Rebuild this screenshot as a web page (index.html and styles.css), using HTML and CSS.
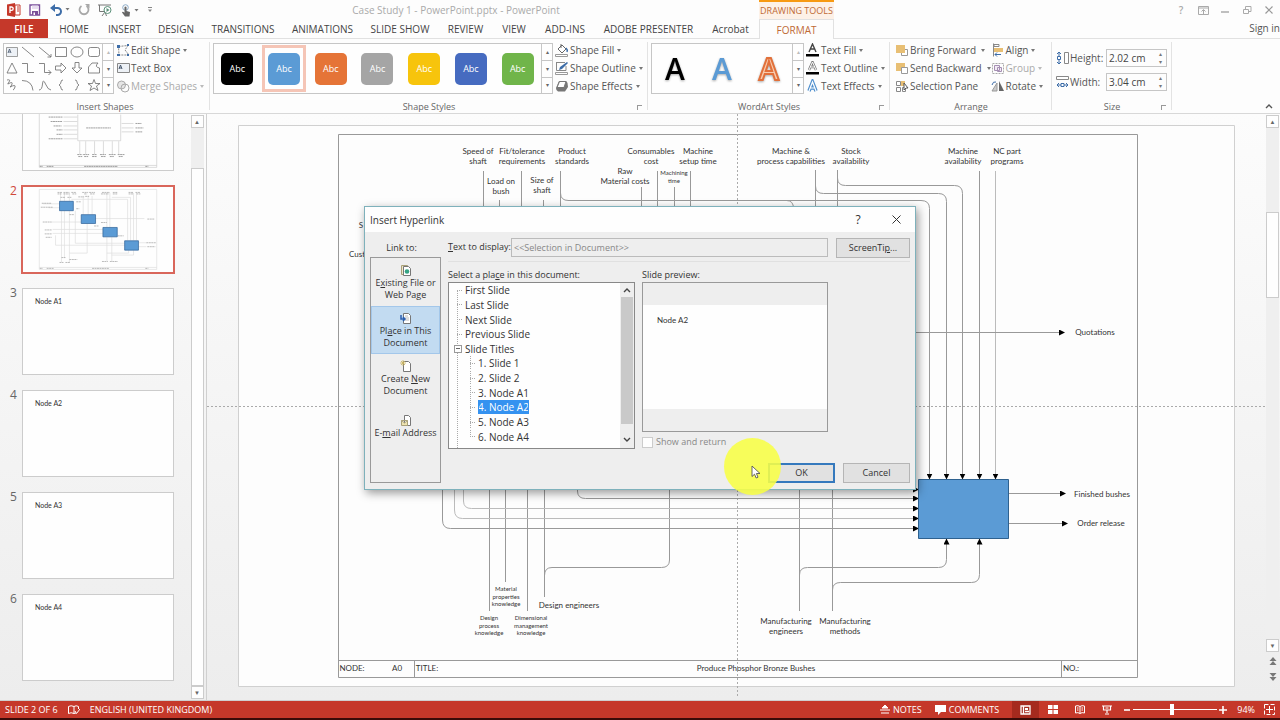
FILE: index.html
```html
<!DOCTYPE html>
<html lang="en">
<head>
<meta charset="utf-8">
<title>Case Study 1 - PowerPoint.pptx - PowerPoint</title>
<link rel="stylesheet" href="styles.css">
</head>
<body>
<div class="app">
  <header class="titlebar">
    <div class="quick">
      <svg width="14" height="14" viewBox="0 0 14 14"><path d="M8 2h5v10H8z" fill="#fff" stroke="#c5382a"/><path d="M10 4h2M10 6h2M10 8h2" stroke="#c5382a"/><path d="M0 1.500 8 0v14L0 12.500z" fill="#c5382a"/><path d="M3 10V4h1.500a1.600 1.600 0 0 1 0 3.400H3" fill="none" stroke="#fff" stroke-width="1.300"/></svg>
      <button aria-label="Save"><svg width="12" height="12" viewBox="0 0 12 12"><path d="M1 1h9.500v10H1z" fill="#fff" stroke="#7a4f9a" stroke-width="1.400"/><path d="M3 1.500h6v3.500H3z" fill="#e7dcef"/><path d="M3 7h6v4H3z" fill="#7a4f9a"/><path d="M4.500 8.500H6V11H4.500z" fill="#fff"/></svg></button>
      <button aria-label="Undo"><svg width="20" height="12" viewBox="0 0 20 12"><path d="M2 4h5.500a3.500 3.500 0 0 1 0 7H6" fill="none" stroke="#3d6da8" stroke-width="2"/><path d="M5 0v8L0 4z" fill="#3d6da8"/><path d="M15.500 4h4l-2 2.500z" fill="#777"/></svg></button>
      <button aria-label="Repeat"><svg width="12" height="12" viewBox="0 0 12 12"><path d="M8.500 2A4.500 4.500 0 1 1 3.500 2" fill="none" stroke="#a8a8a8" stroke-width="1.800"/><path d="M7 0h4.500v4.500z" fill="#a8a8a8"/></svg></button>
      <button aria-label="Start from beginning"><svg width="14" height="13" viewBox="0 0 14 13"><path d="M0 1h13M1.500 1v6.500H7M4 12l3-4 1.500 4" fill="none" stroke="#777"/><circle cx="9.500" cy="6" r="3.500" fill="#fff" stroke="#5b9079"/><path d="M8.500 4v4l3-2z" fill="#5b9079"/></svg></button>
      <button aria-label="Touch mode"><svg width="18" height="13" viewBox="0 0 18 13"><circle cx="4.500" cy="3.500" r="2.800" fill="none" stroke="#8cabc8"/><path d="M3.500 3q1-1 2 0v4l3.500 1-.5 4.500H4L1 8.500q.5-1.500 2.500.2z" fill="#666"/><path d="M13.500 5h4l-2 2.500z" fill="#777"/></svg></button>
      <button aria-label="Customize toolbar"><svg width="6" height="6" viewBox="0 0 6 6"><path d="M1 .5h4" stroke="#888"/><path d="M1 2.500h4L3 5z" fill="#888"/></svg></button>
    </div>
    <div class="doc-title">Case Study 1 - PowerPoint.pptx - PowerPoint</div>
    <div class="context">DRAWING TOOLS</div>
    <div class="window-buttons">
      <button aria-label="Help">?</button>
      <button aria-label="Ribbon display"><svg width="11" height="9" viewBox="0 0 11 9"><path d="M.5.500h10v8H.500zM.5 2h10M5.500 8V4M3.500 5.500l2-2 2 2" fill="none" stroke="#aaa"/></svg></button>
      <button aria-label="Minimize"><svg width="8" height="8" viewBox="0 0 8 8"><path d="M0 6h8" stroke="#aaa" stroke-width="1.500"/></svg></button>
      <button aria-label="Restore"><svg width="9" height="9" viewBox="0 0 9 9"><path d="M.5 3.500h5v4h-5zM2.500 3V.500H8v5H6" fill="none" stroke="#aaa"/></svg></button>
      <button aria-label="Close"><svg width="8" height="8" viewBox="0 0 8 8"><path d="M.5.500l7 7M7.500.500l-7 7" stroke="#999" stroke-width="1.200"/></svg></button>
    </div>
  </header>
  <nav class="tabs">
    <button class="tab file">FILE</button><button class="tab">HOME</button><button class="tab">INSERT</button><button class="tab">DESIGN</button><button class="tab">TRANSITIONS</button><button class="tab">ANIMATIONS</button><button class="tab">SLIDE SHOW</button><button class="tab">REVIEW</button><button class="tab">VIEW</button><button class="tab">ADD-INS</button><button class="tab">ADOBE PRESENTER</button><button class="tab">Acrobat</button><button class="tab active">FORMAT</button>
    <a class="signin" href="#">Sign in</a>
  </nav>
  <section class="ribbon">
    <div class="group shapes-group">
      <div class="group-body">
        <div class="gallery">
          <div class="shape-grid">
            <button aria-label="Text box"><svg width="14" height="14" viewBox="0 0 14 14"><path d="M1.500 2.500h11v9h-11z" fill="#edf1f6" stroke="#888"/><path d="M3 8l1.500-4L6 8M3.500 7h2" fill="none" stroke="#44546a"/></svg></button>
            <button aria-label="Line"><svg width="14" height="14" viewBox="0 0 14 14"><path d="M1 2l12 10"/></svg></button>
            <button aria-label="Arrow"><svg width="14" height="14" viewBox="0 0 14 14"><path d="M1 2l12 10M13 9v3h-3.500"/></svg></button>
            <button aria-label="Rectangle"><svg width="14" height="14" viewBox="0 0 14 14"><path d="M1.500 2.500h11v9h-11z"/></svg></button>
            <button aria-label="Oval"><svg width="14" height="14" viewBox="0 0 14 14"><ellipse cx="7" cy="7" rx="6" ry="5"/></svg></button>
            <button aria-label="Rounded rectangle"><svg width="14" height="14" viewBox="0 0 14 14"><rect x="1.500" y="2.500" width="11" height="9" rx="2"/></svg></button>
            <button aria-label="Triangle"><svg width="14" height="14" viewBox="0 0 14 14"><path d="M7 2l5 10H2z"/></svg></button>
            <button aria-label="Elbow connector"><svg width="14" height="14" viewBox="0 0 14 14"><path d="M1 2.500h5.500v9H13"/></svg></button>
            <button aria-label="Elbow arrow"><svg width="14" height="14" viewBox="0 0 14 14"><path d="M1 2.500h5.500v9H13M10.500 9l2.500 2.500-2.500 2.500"/></svg></button>
            <button aria-label="Right arrow"><svg width="14" height="14" viewBox="0 0 14 14"><path d="M1.500 5H7V2l5 5-5 5V9H1.500z"/></svg></button>
            <button aria-label="Down arrow"><svg width="14" height="14" viewBox="0 0 14 14"><path d="M5 1.500V7H2l5 5 5-5H9V1.500z"/></svg></button>
            <button aria-label="Freeform"><svg width="14" height="14" viewBox="0 0 14 14"><path d="M1.500 12V6L5 2h6Q7 6 12.500 7v5z"/></svg></button>
            <button aria-label="Scribble"><svg width="14" height="14" viewBox="0 0 14 14"><path d="M2 2q4-1 2 2T3 6q5-3 4 0T5 9q6-3 5 0t-2 3"/></svg></button>
            <button aria-label="Arc"><svg width="14" height="14" viewBox="0 0 14 14"><path d="M1 2.500q10 0 11 10"/></svg></button>
            <button aria-label="Curve"><svg width="14" height="14" viewBox="0 0 14 14"><path d="M1 12q3 0 3.500-6t3 0 5.500 6"/></svg></button>
            <button aria-label="Left brace"><svg width="14" height="14" viewBox="0 0 14 14"><path d="M9 2Q7 2 7 4t-2 3q2 1 2 3t2 2"/></svg></button>
            <button aria-label="Right brace"><svg width="14" height="14" viewBox="0 0 14 14"><path d="M5 2q2 0 2 2t2 3q-2 1-2 3t-2 2"/></svg></button>
            <button aria-label="Star"><svg width="14" height="14" viewBox="0 0 14 14"><path d="M7 1.500l1.500 4H13L9.500 8l1.500 4.500L7 10l-4 2.500L4.500 8 1 5.500h4.500z"/></svg></button>
          </div>
          <div class="spin"><button class="off" aria-label="Up">▴</button><button aria-label="Down">▾</button><button aria-label="More">▾</button></div>
        </div>
        <div class="tools">
          <button><svg width="14" height="14" viewBox="0 0 14 14"><path d="M2.500 3.500L12 2.500 9 7l4 5H3z" fill="none" stroke="#888" stroke-dasharray="2 1"/><path d="M1 2h3v3H1zM11 1h2v2h-2zM1 11h3v2H1zM11 11h2v2h-2z" fill="#3d6da8"/></svg>Edit Shape<i></i></button>
          <button><svg width="14" height="14" viewBox="0 0 14 14"><path d="M1.500 2.500h12v9h-12z" fill="#edf1f6" stroke="#888"/><path d="M3 8l1.500-4L6 8M3.500 7h2" fill="none" stroke="#44546a"/></svg>Text Box</button>
          <button class="off"><svg width="14" height="14" viewBox="0 0 14 14"><circle cx="5.500" cy="6" r="4" fill="#e6e6e6" stroke="#aaa"/><circle cx="9" cy="9" r="4" fill="none" stroke="#aaa"/></svg>Merge Shapes<i></i></button>
        </div>
      </div>
      <div class="group-name">Insert Shapes</div>
    </div>
    <div class="group">
      <div class="group-body">
        <div class="gallery grow">
          <div class="styles">
            <button class="cell"><span class="swatch black">Abc</span></button>
            <button class="cell picked"><span class="swatch blue">Abc</span></button>
            <button class="cell"><span class="swatch orange">Abc</span></button>
            <button class="cell"><span class="swatch gray">Abc</span></button>
            <button class="cell"><span class="swatch yellow">Abc</span></button>
            <button class="cell"><span class="swatch navy">Abc</span></button>
            <button class="cell"><span class="swatch green">Abc</span></button>
          </div>
          <div class="spin"><button aria-label="Up">▴</button><button aria-label="Down">▾</button><button aria-label="More">▾</button></div>
        </div>
        <div class="tools shape-tools">
          <button><svg width="14" height="14" viewBox="0 0 14 14"><path d="M3 6l4-4 4 4-4 4zM6 1v4" fill="#fff" stroke="#666"/><path d="M11 5q2 2 1 4" fill="none" stroke="#3d6da8" stroke-width="1.500"/><path d="M.5 11.500h12v2H.500z" fill="#fff" stroke="#999"/></svg>Shape Fill<i></i></button>
          <button><svg width="14" height="14" viewBox="0 0 14 14"><path d="M1 1.500h9M1.500 1v8.500H11V5" fill="none" stroke="#888"/><path d="M4 9l1-3 7-5 1 1-6 6z" fill="#3d6da8"/><path d="M.5 11.500h12v2H.500z" fill="#fff" stroke="#999"/></svg>Shape Outline<i></i></button>
          <button><svg width="14" height="14" viewBox="0 0 14 14"><path d="M4 2h6q2 0 2.500 2L13 8l-3 4.500H3Q1 12 1 9z" fill="#777"/><path d="M4.500 2.500H11L9 8.500H2z" fill="#fff" stroke="#777"/></svg>Shape Effects<i></i></button>
        </div>
      </div>
      <div class="group-name">Shape Styles<span class="launch"></span></div>
    </div>
    <div class="group">
      <div class="group-body">
        <div class="gallery grow">
          <div class="wordart">
            <button aria-label="Fill black"><svg width="30" height="44" viewBox="0 0 30 44"><text x="15" y="33" class="art a1">A</text></svg></button>
            <button aria-label="Fill blue"><svg width="30" height="44" viewBox="0 0 30 44"><text x="15" y="33" class="art a2">A</text></svg></button>
            <button aria-label="Fill orange"><svg width="30" height="44" viewBox="0 0 30 44"><text x="15" y="33" class="art a3">A</text></svg></button>
          </div>
          <div class="spin"><button class="off" aria-label="Up">▴</button><button aria-label="Down">▾</button><button aria-label="More">▾</button></div>
        </div>
        <div class="tools art-tools">
          <button><svg width="14" height="14" viewBox="0 0 14 14"><path d="M3 9L6.500 1 10 9M4.500 6h4" fill="none" stroke="#444" stroke-width="1.400"/><path d="M0 11h13v2.500H0z"/></svg>Text Fill<i></i></button>
          <button><svg width="14" height="14" viewBox="0 0 14 14"><path d="M3 9L6.500 1 10 9M4.500 6h4" fill="none" stroke="#777" stroke-width="2.400"/><path d="M3 9L6.500 1 10 9M4.500 6h4" fill="none" stroke="#fff"/><path d="M0 11h13v2.500H0z"/></svg>Text Outline<i></i></button>
          <button><svg width="14" height="14" viewBox="0 0 14 14"><path d="M3 12L6.500 3 10 12M4.500 9h4" fill="none" stroke="#4f8fcd" stroke-width="3.500"/><path d="M3 12L6.500 3 10 12M4.500 9h4" fill="none" stroke="#fff" stroke-width="1.200"/></svg>Text Effects<i></i></button>
        </div>
      </div>
      <div class="group-name">WordArt Styles<span class="launch"></span></div>
    </div>
    <div class="group">
      <div class="group-body arrange">
        <div class="tools">
          <button><svg width="14" height="14" viewBox="0 0 14 14"><path d="M6.500 6.500h6v6h-6z" fill="#fff" stroke="#999"/><path d="M1 2h9v8H1z" fill="#e8bf74"/></svg>Bring Forward<i class="far"></i></button>
          <button><svg width="14" height="14" viewBox="0 0 14 14"><path d="M1 2h9v8H1z" fill="#e8bf74"/><path d="M6.500 6.500h6v6h-6z" fill="#fff" stroke="#999"/></svg>Send Backward<i class="far"></i></button>
          <button><svg width="14" height="14" viewBox="0 0 14 14"><path d="M1.500 2.500h4v4h-4zM1.500 8.500h4v4h-4zM7.500 8.500h3v4h-3z" fill="#fff" stroke="#888"/><path d="M6 2h4v5H6z" fill="#e8bf74"/><path d="M9 4v7l2-2h2z" fill="#fff" stroke="#555"/></svg>Selection Pane</button>
        </div>
        <div class="tools">
          <button><svg width="14" height="14" viewBox="0 0 14 14"><path d="M2.500.500v13" stroke="#888"/><path d="M3 1.500h5v2H3z" fill="#fff" stroke="#888"/><path d="M3 5h9v4H3z" fill="#e8bf74"/><path d="M4 11.500h6M6 9.500l-2 2 2 2" fill="none" stroke="#3d6da8"/></svg>Align<i></i></button>
          <button class="off"><svg width="14" height="14" viewBox="0 0 14 14"><path d="M1.500 2.500h11v10h-11z" fill="none" stroke="#aaa" stroke-dasharray="2 1"/><path d="M3.500 4.500h5v5h-5zM6.500 6.500h4v4h-4z" fill="#f3ebf5" stroke="#a58fb3"/></svg>Group<i></i></button>
          <button><svg width="14" height="14" viewBox="0 0 14 14"><path d="M6 12V4L1 12z" fill="#ccc" stroke="#999"/><path d="M8 12V2l5 10z" fill="#666"/><path d="M1 6q1-4 4-3" fill="none" stroke="#3d6da8"/></svg>Rotate<i></i></button>
        </div>
      </div>
      <div class="group-name">Arrange</div>
    </div>
    <div class="group">
      <div class="size">
        <svg width="13" height="14" viewBox="0 0 13 14"><path d="M3 1v12M1 3l2-2 2 2M1 11l2 2 2-2" fill="none" stroke="#3d6da8"/><path d="M1.500 5.500h3v3h-3z" fill="#fff" stroke="#3d6da8"/><path d="M8.500 1.500h4v11h-4z" fill="#fff" stroke="#888"/></svg>
        <label for="h">Height:</label><span class="num"><input id="h" value="2.02 cm"><em>▴<br>▾</em></span>
        <svg width="13" height="14" viewBox="0 0 13 14"><path d="M.5 1.500h12v3H.500z" fill="#fff" stroke="#888"/><path d="M1 10h11M3 8l-2 2 2 2M10 8l2 2-2 2" fill="none" stroke="#3d6da8"/><path d="M5 8.500h3v3H5z" fill="#fff" stroke="#3d6da8"/></svg>
        <label for="w">Width:</label><span class="num"><input id="w" value="3.04 cm"><em>▴<br>▾</em></span>
      </div>
      <div class="group-name">Size<span class="launch"></span></div>
    </div>
    <div class="collapse"><svg width="8" height="6" viewBox="0 0 8 6"><path d="M1 5l3-3 3 3" fill="none" stroke="#555" stroke-width="1.400"/></svg></div>
  </section>
  <main class="work">
    <aside class="panel">
      <ol class="thumbs">
        <li><span class="no">1</span><div class="thumb"><svg viewBox="22 84 152 87">
          <path d="M38.500 100v67.500H157.500V100M38.500 165.500h119M77.500 114v26.500h43.500V114" fill="none" stroke="#ccc" stroke-width=".7"/>
          <path d="M63 116.500h14M63 121h14M63 125.500h14M63 129.500h14M63 134h14M63 138.500h14M122 123h12M122 127.500h12M122 131.500h12M79.500 141v13M85.500 141v13M94.500 141v13M103.500 141v13M112.500 141v13M119 141v13" stroke="#ccc" stroke-width=".7"/>
          <path d="M48 116.500h14M50 121h12M53 125.500h8M56 129.500h6M56 134h6M48 138.500h14M86 127.500h25M136 123h6M136 127.500h8M136 131.500h7M77 154.500h5M83 154.500h6M92 154.500h5M100 154.500h6M109 154.500h7M118 154.500h7M78 156.500h4M84 156.500h4M92 156.500h5M101 156.500h5M110 156.500h4M119 156.500h4M39 166.500h3M46 166.500h7M84 166.500h34M146 166.500h3" stroke="#888" stroke-width=".8" stroke-dasharray="2 .4"/>
        </svg></div></li>
        <li class="current"><span class="no">2</span><div class="thumb"><svg viewBox="22 186 152 87">
          <path d="M38.500 188.500h119v81h-119zM38.500 267.500h119" fill="none" stroke="#ddd" stroke-width=".7"/>
          <path d="M60 192v8M64 192v8M69 192v8M71 198.500h57V240M83 195v19M88 195v19M92 195v19M107 192v35M110 192v35M112 196.500h19V240M134 192v48M137 192v48M42 203h17M48 207h11M51 221.500h30M52 229h51M52 233h51M55 235v10h70M75 210v33h50M95 218h50M61 210v52M64 210v48M69 210v52M87 223v30H69M107 237v24M112 237v24M112 255h22v-5M107 253h22v-3M139 242.500h8M139 246.500h8" fill="none" stroke="#ddd" stroke-width=".7"/>
          <path d="M57 191.500h5M63 191.500h6M71 191.500h5M82 191.500h6M89 191.500h6M102 191.500h8M113 191.500h5M129 191.500h5M136 191.500h5M57 193h4M63 193h6M72 193h4M84 193h3M90 193h5M101 193h8M113 193h5M129 193h5M137 193h4M60 196.500h5M67 196.500h4M78 196h6M85 195.500h4M41 202.500h10M40 206.500h12M76 201h5M76 208h3M69 214h5M42 221.500h9M44 229.500h7M44 233.500h7M45 237h6M94 225.500h5M101 222h6M118 235.500h6M148 218.500h7M147 242.500h10M148 246.500h8M61 257.500h4M69 259.500h8M59 262.500h4M65 262.500h5M102 261.500h6M110 261.500h8M39 268.500h3M46 268.500h7M92 268.500h17M146 268.500h3" stroke="#aaa" stroke-width=".8" stroke-dasharray="2 .5"/>
          <path d="M59 200.500h14v9.500H59zM81 214h14.500v9H81zM103 227h14.500v9.500H103zM125 240.500h14v9.500h-14z" fill="#5b9bd5" stroke="#2c5f94" stroke-width=".7"/>
        </svg></div></li>
        <li><span class="no">3</span><div class="thumb">Node A1</div></li>
        <li><span class="no">4</span><div class="thumb">Node A2</div></li>
        <li><span class="no">5</span><div class="thumb">Node A3</div></li>
        <li><span class="no">6</span><div class="thumb">Node A4</div></li>
      </ol>
    </aside>
    <div class="scroll left-scroll"><button aria-label="Scroll up">▲</button><div class="lane"></div><div class="knob"></div><button aria-label="Scroll down">▼</button></div>
    <div class="stage">
      <svg class="slide" viewBox="207 114 1058 587">
        <defs>
          <marker id="tip" viewBox="0 0 6 6" refX="5" refY="3" markerWidth="6" markerHeight="6" orient="auto"><path d="M0 0l6 3-6 3z"/></marker>
        </defs>
        <path d="M238.500 125.500h996v561h-996z" fill="#fdfdfd" stroke="#d0d0d0"/>
        <path d="M338.500 134.500h799v543h-799zM338.500 660.500h799M414.500 660v18M1061.500 660v18" fill="none" stroke="#999"/>
        <path d="M207 406.500h1058M737.500 114v582" stroke="#aaa" stroke-dasharray="2 2"/>
        <g fill="none" stroke="#999">
          <path d="M483.500 171v50M499.500 200v20M521.500 171v50M543.500 200v20M560.500 171v50M641.500 187v30M657.500 171v50M674.500 187v30M690.500 171v50M815.500 170v50M837.500 170v50M560.500 193q0 7.500 8 7.500h218q7 0 7 8v20"/>
          <path d="M489.500 480v131M505.500 480v102M527.500 480v131M544.500 480v117M669.500 480v80q0 7.500-8 7.500H552q-7.500 0-7.500 8M799.500 480v131M832.500 480v131"/>
          <g marker-end="url(#tip)">
            <path d="M568 200.500h353q8.500 0 8.500 8v270"/><path d="M815.500 186q0 7.500 8 7.500h115q8 0 8 8v277"/><path d="M837.500 178q0 7.500 8 7.500h109q8 0 8 8v285"/><path d="M979.500 171v307.500"/><path d="M995.500 171v307.500" stroke="#bbb"/>
            <path d="M442.500 480v40q0 8.500 8 8.500H918"/><path d="M454.500 480v30q0 8.500 8 8.500H918" stroke="#bbb"/><path d="M463.500 480v21q0 7.500 8 7.500H918" stroke="#bbb"/><path d="M577.500 480v11q0 7.500 8 7.500H918"/><path d="M800 489.500h118"/>
            <path d="M915 332.500h149"/><path d="M1008 493.500h57"/><path d="M1008 523.500h59"/>
            <path d="M799.500 575q0-7.500 8-7.500h131q8 0 8-8v-20"/><path d="M832.500 590q0-7.500 8-7.500h131q8 0 8-8v-35"/>
          </g>
        </g>
        <path d="M918.500 479.500h90v59h-90z" fill="#5b9bd5" stroke="#2e618f"/>
        <g class="lbl">
          <text x="478" y="154">Speed of<tspan x="478" y="164">shaft</tspan></text>
          <text x="522" y="154">Fit/tolerance<tspan x="522" y="164">requirements</tspan></text>
          <text x="572" y="154">Product<tspan x="572" y="164">standards</tspan></text>
          <text x="651" y="154">Consumables<tspan x="651" y="164">cost</tspan></text>
          <text x="698" y="154">Machine<tspan x="698" y="164">setup time</tspan></text>
          <text x="625" y="174">Raw<tspan x="625" y="184">Material costs</tspan></text>
          <text x="501" y="184">Load on<tspan x="501" y="194">bush</tspan></text>
          <text x="542" y="183">Size of<tspan x="542" y="193">shaft</tspan></text>
          <text x="791" y="154">Machine &amp;<tspan x="791" y="164">process capabilities</tspan></text>
          <text x="851" y="154">Stock<tspan x="851" y="164">availability</tspan></text>
          <text x="963" y="154">Machine<tspan x="963" y="164">availability</tspan></text>
          <text x="1007" y="154">NC part<tspan x="1007" y="164">programs</tspan></text>
          <text x="1095" y="335">Quotations</text>
          <text x="1102" y="497">Finished bushes</text>
          <text x="1101" y="526">Order release</text>
          <text x="786" y="624">Manufacturing<tspan x="786" y="634">engineers</tspan></text>
          <text x="845" y="624">Manufacturing<tspan x="845" y="634">methods</tspan></text>
          <text x="569" y="608">Design engineers</text>
          <text x="756" y="671">Produce Phosphor Bronze Bushes</text>
          <text x="352" y="671">NODE:</text><text x="397" y="671">A0</text><text x="427" y="671">TITLE:</text><text x="1071" y="671">NO.:</text>
          <text x="361" y="228">S</text><text x="357" y="257">Cust</text>
        </g>
        <g class="lbl tiny">
          <text x="674" y="175">Machining<tspan x="674" y="183">time</tspan></text>
          <text x="506" y="591">Material<tspan x="506" y="599">properties</tspan><tspan x="506" y="606">knowledge</tspan></text>
          <text x="489" y="620">Design<tspan x="489" y="628">process</tspan><tspan x="489" y="635">knowledge</tspan></text>
          <text x="531" y="620">Dimensional<tspan x="531" y="628">management</tspan><tspan x="531" y="635">knowledge</tspan></text>
        </g>
      </svg>
    </div>
    <div class="scroll right-scroll"><button aria-label="Scroll up">▲</button><div class="lane"></div><div class="knob"></div><div class="lane long"></div><button aria-label="Scroll down">▼</button>
      <svg width="10" height="10" viewBox="0 0 10 10"><path d="M5 0l3.500 4h-7zM5 4l3.500 4h-7z" fill="#777"/></svg>
      <svg width="10" height="10" viewBox="0 0 10 10"><path d="M5 9l3.500-4h-7zM5 5l3.500-4h-7z" fill="#777"/></svg>
    </div>
  </main>
  <footer class="status">
    <span>SLIDE 2 OF 6</span>
    <svg class="spell" width="12" height="10" viewBox="0 0 12 10"><path d="M6 1.500Q3 0 .500 1.500v7Q3 7 6 8.500V1.500Q8 0 10.500 1.500V4M6 8.500l2-.5M7 6l1.500 2.500L12 4" fill="none" stroke="#fff"/></svg>
    <span class="lang">ENGLISH (UNITED KINGDOM)</span>
    <button><svg width="10" height="10" viewBox="0 0 10 10"><path d="M5 0l3 3H2zM0 5h10M1 8h8" fill="#fff" stroke="#fff"/></svg>NOTES</button>
    <button class="comments"><svg width="11" height="10" viewBox="0 0 11 10"><path d="M0 0h11v7H6l-3 3V7H0z" fill="#fff"/></svg>COMMENTS</button>
    <div class="views">
      <button class="on" aria-label="Normal"><svg width="11" height="10" viewBox="0 0 11 10"><path d="M1 1h9v8H1zM3.500 1v8M5 6.500h4" fill="none" stroke="#fff" stroke-width="1.300"/><path d="M5 3h3v2H5z" fill="#fff"/></svg></button>
      <button aria-label="Slide sorter"><svg width="10" height="9" viewBox="0 0 10 9"><path d="M0 0h4.500v4H0zM5.500 0H10v4H5.500zM0 5h4.500v4H0zM5.500 5H10v4H5.500z" fill="#fff"/></svg></button>
      <button aria-label="Reading view"><svg width="10" height="10" viewBox="0 0 10 10"><path d="M5 1.500Q3 0 .500 1v7Q3 7 5 8.500 7 7 9.500 8V1Q7 0 5 1.500v7M2 3h1.500M2 5h1.500M6.500 3H8M6.500 5H8" fill="none" stroke="#fff"/></svg></button>
      <button aria-label="Slide show"><svg width="10" height="10" viewBox="0 0 10 10"><path d="M0 1h10M1.500 1v4h7V1M5 5v3M3 9h4M3.500 3h3" fill="none" stroke="#fff" stroke-width="1.200"/></svg></button>
    </div>
    <div class="zoom"><button aria-label="Zoom out"><svg width="8" height="8" viewBox="0 0 8 8"><path d="M1 4h6" stroke="#fff" stroke-width="1.600"/></svg></button><input type="range" min="0" max="100" value="46" aria-label="Zoom"><button aria-label="Zoom in"><svg width="8" height="8" viewBox="0 0 8 8"><path d="M0 4h8M4 0v8" stroke="#fff" stroke-width="1.600"/></svg></button></div>
    <span class="pct">94%</span>
    <svg width="11" height="11" viewBox="0 0 11 11"><path d="M.5.500h10v10H.500z" fill="none" stroke="#fff" stroke-dasharray="4 2"/><path d="M5.500 2v7M2 5.500h7" stroke="#fff"/></svg>
  </footer>
</div>
<div class="overlay">
  <div class="dialog" role="dialog" aria-labelledby="dt">
    <div class="dialog-title"><span id="dt">Insert Hyperlink</span><button aria-label="Help">?</button><button aria-label="Close"><svg width="9" height="9" viewBox="0 0 9 9"><path d="M.5.500l8 8M8.500.500l-8 8" stroke="#333"/></svg></button></div>
    <div class="dialog-body">
      <div class="link-col">
        <div class="link-head">Link to:</div>
        <div class="link-list">
          <button><svg width="12" height="13" viewBox="0 0 12 13"><path d="M1.500 1.500h6v9h-6z" fill="#eee8c8" stroke="#aaa178"/><path d="M3.500 2.500h5l2 2v7h-7z" fill="#fff" stroke="#777"/><circle cx="7" cy="7.500" r="2.300" fill="#35a383"/></svg><span>E<u>x</u>isting File or</span><span>Web Page</span></button>
          <button class="on"><svg width="12" height="13" viewBox="0 0 12 13"><path d="M3.500 1.500h5l2 2v8h-7z" fill="#fff" stroke="#777"/><path d="M5 4h3M5 6h4M5 8h4" stroke="#bbb"/><path d="M1 3v4h4M3 5l2 2-2 2" fill="none" stroke="#2c5fae" stroke-width="1.500"/></svg><span>Pl<u>a</u>ce in This</span><span>Document</span></button>
          <button><svg width="12" height="13" viewBox="0 0 12 13"><path d="M3.500 1.500h5l2 2v8h-7z" fill="#fff" stroke="#777"/><path d="M3 0v6M0 3h6M1 1l4 4M5 1L1 5" stroke="#c9b25a" stroke-width=".8"/></svg><span>Create <u>N</u>ew</span><span>Document</span></button>
          <button class="mail"><svg width="12" height="13" viewBox="0 0 12 13"><path d="M4.500 1.500h4l2 2v8h-6z" fill="#fff" stroke="#777"/><path d="M1.500 6.500h6v5h-6zl3 2.500 3-2.500" fill="#eee3b0" stroke="#aaa178"/></svg><span>E-<u>m</u>ail Address</span></button>
        </div>
      </div>
      <div class="form">
        <div class="row-text"><label for="disp"><u>T</u>ext to display:</label><input id="disp" value="&lt;&lt;Selection in Document&gt;&gt;" disabled><button class="btn">ScreenTi<u>p</u>...</button></div>
        <div class="cols">
          <div class="place">
            <div class="head">Select a pla<u>c</u>e in this document:</div>
            <div class="listbox">
              <ul class="tree">
                <li>First Slide</li><li>Last Slide</li><li>Next Slide</li><li>Previous Slide</li><li class="open">Slide Titles</li>
                <li class="sub">1. Slide 1</li><li class="sub">2. Slide 2</li><li class="sub">3. Node A1</li><li class="sub"><mark>4. Node A2</mark></li><li class="sub">5. Node A3</li><li class="sub last">6. Node A4</li>
              </ul>
              <div class="tree-scroll"><svg width="8" height="6" viewBox="0 0 8 6"><path d="M1 5l3-3 3 3" fill="none" stroke="#444" stroke-width="1.400"/></svg><div></div><svg width="8" height="6" viewBox="0 0 8 6"><path d="M1 1l3 3 3-3" fill="none" stroke="#444" stroke-width="1.400"/></svg></div>
            </div>
          </div>
          <div class="preview">
            <div class="head">Slide preview:</div>
            <div class="frame"><div>Node A2</div></div>
            <label class="check"><input type="checkbox" disabled>Show and return</label>
          </div>
        </div>
        <div class="actions"><button class="btn ok">OK</button><button class="btn">Cancel</button></div>
      </div>
    </div>
    <div class="halo"><svg width="10" height="14" viewBox="0 0 10 14"><path d="M1 1v10.500l2.500-2.300L5.200 13l1.800-.8-1.600-3.700H9z" fill="#fff" stroke="#555" stroke-width=".9"/></svg></div>
  </div>
</div>
</body>
</html>
```
FILE: styles.css
```css
* { box-sizing: border-box; }
body { margin: 0; font: 10px/12px "Open Sans", "Noto Sans", sans-serif; color: #444; background: #fdfdfd; }
button { font: inherit; color: inherit; border: 0; background: none; padding: 0; }
svg { display: block; flex: none; }
.app { height: 100vh; display: grid; grid-template-rows: 19px 20px 75px minmax(0, 1fr) 19px; }

.titlebar { display: grid; grid-template-columns: 153px 606px 75px 1fr; }
.quick { display: flex; align-items: center; justify-content: space-between; padding-left: 7px; }
.doc-title { text-align: center; color: #aaa; line-height: 20px; }
.context { border-top: 2px solid #f79a13; background: #fdf1e7; color: #bf6a35; text-align: center; font-size: 9px; line-height: 17px; white-space: nowrap; }
.window-buttons { display: grid; grid-template-columns: repeat(5, 22px); justify-content: end; color: #aaa; font-weight: 600; }
.window-buttons button { display: grid; place-items: center; }

.tabs { display: grid; grid-template-columns: 48px 52px 49px 54px 80px 79px 76px 55px 42px 60px 107px 57px 75px 1fr; border-bottom: 1px solid #e1e1e1; }
.tab { white-space: nowrap; }
.tab.file { background: #c5382a; color: #fff; font-weight: 600; }
.tab.active { color: #bf6a35; background: #fdfdfd; border: 1px solid #e1e1e1; border-bottom: 0; margin-bottom: -1px; }
.signin { color: #555; text-decoration: none; text-align: right; line-height: 18px; }

.ribbon { display: grid; grid-template-columns: 210px 438px 242px 162px 120px 1fr; border-bottom: 1px solid #d8d8d8; }
.group { display: grid; grid-template-rows: 1fr 12px; padding: 4px 3px 0; background: linear-gradient(#e3e3e3, #e3e3e3) right 3px / 1px 68px no-repeat; }
.group-body { display: flex; gap: 2px; min-width: 0; }
.group-name { text-align: center; font-size: 9px; color: #666; position: relative; }
.launch { position: absolute; right: 3px; top: 4px; width: 5px; height: 5px; border: 1px solid #999; border-width: 1px 0 0 1px; }
.gallery { height: 51px; display: flex; border: 1px solid #c6c6c6; background: #fefefe; }
.gallery.grow { flex: 1; }
.shape-grid { width: 98px; display: grid; grid-template-columns: repeat(6, 1fr); }
.shape-grid button { display: grid; place-items: center; }
.shape-grid svg { fill: none; stroke: #6a6a6a; stroke-width: .8; }
.spin { width: 11px; display: grid; grid-template-rows: repeat(3, 1fr); border-left: 1px solid #c6c6c6; }
.spin button { font-size: 6px; line-height: 6px; color: #666; }
.spin button + button { border-top: 1px solid #c6c6c6; }
.spin .off { color: #bbb; }
.tools { display: flex; flex-direction: column; gap: 4px; white-space: nowrap; color: #555; }
.tools button { display: flex; align-items: center; gap: 1px; height: 14px; }
.tools .off { color: #aaa; }
.tools i { width: 0; border: 2px solid transparent; border-top: 3px solid #777; border-bottom: 0; margin-left: 2px; }
.tools .off i { border-top-color: #bbb; }
.shape-tools { width: 90px; }
.art-tools { width: 81px; }
.arrange { gap: 0; padding-left: 2px; }
.arrange i.far { margin-left: 4px; }
.styles { flex: 1; display: grid; grid-template-columns: repeat(7, 1fr); }
.cell { display: grid; place-items: center; border: 3px solid transparent; margin: 1px; }
.cell.picked { border-color: #f5c5b6; }
.swatch { width: 32px; height: 32px; border-radius: 5px; color: #fff; line-height: 31px; font-size: 9px; }
.black { background: #000; }
.blue { background: #5b9bd5; }
.orange { background: #e57437; }
.gray { background: #a5a5a5; }
.yellow { background: #f7c40c; }
.navy { background: #466bc0; }
.green { background: #70b54a; }
.wordart { flex: 1; display: grid; grid-template-columns: repeat(3, 1fr); place-items: center; }
.art { font: 600 30px "Open Sans", sans-serif; text-anchor: middle; filter: drop-shadow(0 1px 1px #aaa); }
.a1 { fill: #000; }
.a2 { fill: #5b9bd5; }
.a3 { fill: #f8cbad; stroke: #e2703a; stroke-width: 2px; }
.size { display: grid; grid-template-columns: 13px 35px 61px; column-gap: 1px; row-gap: 6px; align-content: center; align-items: center; padding: 0 0 4px 1px; color: #555; }
.num { display: flex; border: 1px solid #c6c6c6; height: 18px; }
.num input { width: 100%; min-width: 0; border: 0; padding: 0 2px; font: inherit; color: #444; background: none; }
.num em { font: 6px/8px "DejaVu Sans", sans-serif; padding-right: 4px; color: #777; }
.collapse { display: grid; place-items: end; padding: 4px 7px; }

.work { display: grid; grid-template-columns: 190px 17px minmax(0, 1fr) 15px; min-height: 0; background: linear-gradient(#fcfcfc, #ededed); border-bottom: 1px solid #cfcfcf; overflow: hidden; }
.panel { display: flex; flex-direction: column; justify-content: flex-end; overflow: hidden; min-height: 0; }
.thumbs { list-style: none; margin: 0; padding: 0 16px 19px 10px; display: grid; gap: 15px; }
.thumbs li { display: grid; grid-template-columns: 12px 1fr; }
.no { font-size: 12px; line-height: 10px; color: #666; }
.thumb { height: 87px; border: 1px solid #ccc; background: #fefefe; font: 7px/9px Lato, sans-serif; color: #333; padding: 8px 12px; overflow: hidden; }
.thumb:has(svg) { padding: 0; }
.thumb svg { width: 100%; }
.current .no { color: #d0483a; }
.current .thumb { outline: 2px solid #d9665b; outline-offset: -1px; }
.scroll { display: flex; flex-direction: column; align-items: center; }
.scroll button { width: 13px; height: 13px; border: 1px solid #ccc; background: #fefefe; font-size: 6px; line-height: 8px; color: #666; flex: none; }
.lane { width: 13px; height: 40px; background: #efefef; }
.knob { width: 13px; background: #fefefe; border: 1px solid #ccc; }
.left-scroll { border-right: 1px solid #d0d0d0; padding: 1px 2px 1px 0; }
.left-scroll .knob { flex: 1; }
.right-scroll { padding: 1px 0 18px; }
.right-scroll .lane { flex: 85; }
.right-scroll .knob { height: 86px; }
.right-scroll .lane.long { flex: 344; }
.right-scroll svg { margin-top: 5px; }
.stage { min-width: 0; min-height: 0; }
.slide { width: 100%; height: 587px; }
.lbl { font: 8px Lato, sans-serif; text-anchor: middle; fill: #333; }
.tiny { font-size: 6px; }

.status { display: flex; align-items: center; background: #c5382a; color: #fff; font-size: 9px; padding: 0 5px; border-bottom: 2px solid #3a0b08; white-space: nowrap; }
.status button { display: flex; align-items: center; gap: 3px; }
.spell { margin: 0 10px; }
.lang { margin-right: auto; }
.comments { margin: 0 13px; }
.views { display: grid; grid-template-columns: repeat(4, 27px); align-self: stretch; }
.views button { justify-content: center; }
.views .on { background: #a52a1e; }
.zoom { display: flex; align-items: center; gap: 2px; padding: 0 10px 0 3px; }
.pct { padding-right: 9px; }
.zoom input { width: 84px; margin: 0; height: 12px; appearance: none; background: linear-gradient(#fff, #fff) center / 100% 1px no-repeat; }
.zoom input::-webkit-slider-thumb { appearance: none; width: 4px; height: 11px; background: #fff; }

.overlay { position: absolute; inset: 0; display: grid; place-items: center; padding-bottom: 24px; }
.dialog { position: relative; width: 552px; border: 1px solid #7eb1bb; background: #eee; box-shadow: 2px 3px 9px rgba(0, 0, 0, .4); color: #333; }
.dialog-title { height: 25px; background: #fefefe; display: flex; align-items: center; padding-left: 5px; }
.dialog-title span { margin-right: auto; }
.dialog-title button { width: 38px; display: grid; place-items: center; font-size: 12px; }
.dialog-body { display: grid; grid-template-columns: 71px 1fr; gap: 7px; padding: 6px 5px; font-size: 9px; }
.link-head { text-align: center; padding-right: 8px; line-height: 19px; }
.link-list { border: 1px solid #999; height: 226px; display: flex; flex-direction: column; }
.link-list button { height: 48px; display: flex; flex-direction: column; align-items: center; padding-top: 6px; line-height: 12px; white-space: nowrap; }
.link-list .on { background: #c2dbf1; outline: 1px solid #a3c7ea; outline-offset: -1px; }
.link-list .mail { padding-top: 12px; }
.row-text { display: grid; grid-template-columns: 63px 1fr 74px; border-bottom: 1px solid #e0e0e0; padding-bottom: 3px; line-height: 18px; white-space: nowrap; }
.row-text input { margin-right: 8px; min-width: 0; border: 1px solid #bbb; background: #eee; color: #888; font: inherit; padding: 0 2px; height: 19px; }
.btn { border: 1px solid #b5b5b5; background: #e1e1e1; height: 20px; line-height: 18px; }
.cols { display: grid; grid-template-columns: 187px 186px; gap: 7px; padding-top: 5px; }
.head { line-height: 15px; white-space: nowrap; }
.listbox { border: 1px solid #888; background: #fefefe; height: 167px; display: grid; grid-template-columns: 1fr 14px; }
.tree { list-style: none; margin: 0; padding: 0 0 4px; display: grid; grid-auto-rows: 1fr; font-size: 10px; align-items: center; background: repeating-linear-gradient(#aaa 0 1px, transparent 1px 2px) 8px 8px / 1px 160px no-repeat; }
.tree li { padding-left: 16px; line-height: 14px; background: repeating-linear-gradient(90deg, #aaa 0 1px, transparent 1px 2px) 8px 50% / 6px 1px no-repeat; }
.tree li.open { background: linear-gradient(#666, #666) 7px 50% / 4px 1px no-repeat, linear-gradient(#fefefe, #fefefe) 6px 50% / 6px 6px no-repeat, linear-gradient(#999, #999) 5px 50% / 8px 8px no-repeat; }
.tree li.sub { padding-left: 29px; background: repeating-linear-gradient(90deg, #aaa 0 1px, transparent 1px 2px) 21px 50% / 6px 1px no-repeat, repeating-linear-gradient(#aaa 0 1px, transparent 1px 2px) 21px 0 / 1px 100% no-repeat; }
.tree li.last { background-size: 6px 1px, 1px 50%; }
.tree mark { background: #3592f0; color: #fff; outline: 1px solid #3592f0; outline-offset: -1px; }
.tree-scroll { display: grid; grid-template-rows: 14px 1fr 14px; padding-bottom: 1px; background: #eee; justify-items: center; align-items: center; }
.tree-scroll div { width: 12px; height: 127px; background: #c9c9c9; align-self: start; }
.frame { height: 150px; border: 1px solid #999; padding: 22px 0; }
.frame div { height: 104px; background: #fefefe; padding: 9px 14px; font: 8px/12px Lato, sans-serif; }
.check { display: flex; align-items: center; gap: 3px; color: #888; padding-top: 4px; }
.check input { appearance: none; margin: 0; width: 11px; height: 11px; border: 1px solid #ccc; background: #fefefe; }
.actions { display: grid; grid-template-columns: 67px 67px; gap: 8px; justify-content: end; padding-top: 14px; }
.ok { border: 2px solid #3579bd; line-height: 16px; }
.halo { position: absolute; left: 359px; top: 231px; width: 57px; height: 57px; border-radius: 50%; background: rgba(248, 255, 70, .88); display: grid; place-items: center; padding: 10px 0 0 6px; }
```
